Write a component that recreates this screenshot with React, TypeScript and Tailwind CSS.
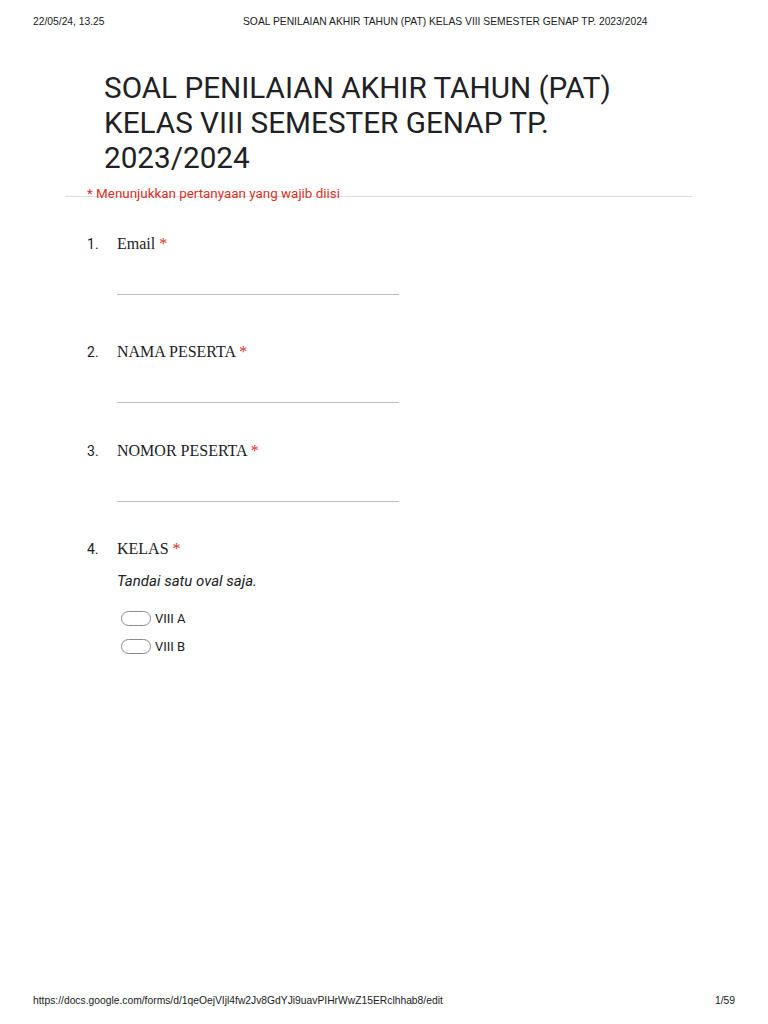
import React from 'react';

const Star = () => <span className="text-[#d93025]"> *</span>;

const TextQuestion = ({ num, label, className }: { num: number; label: string; className?: string }) => (
  <div className={`flex ${className ?? ''}`}>
    <div className="w-[30px] font-['Roboto',sans-serif] text-[14px] leading-[20px] text-[#202124]">{num}.</div>
    <div className="flex-1">
      <div className="font-['Liberation_Serif',serif] text-[16px] leading-[20px] text-[#202124]">
        {label}
        <Star />
      </div>
      <div className="mt-[40px] h-px w-[282px] bg-[#bdbdbd]" />
    </div>
  </div>
);

const Oval = ({ label }: { label: string }) => (
  <div className="flex items-center gap-[4px]">
    <div className="h-[15px] w-[30px] rounded-full border border-[#8a8a8a]" />
    <span className="font-['Roboto',sans-serif] text-[13px] text-[#202124]">{label}</span>
  </div>
);

export default function App() {
  return (
    <div className="relative flex min-h-[1024px] w-[768px] flex-col bg-white">
      <div className="flex px-[33px] pt-[16px] font-['Liberation_Sans',Arial,sans-serif] text-[10.3px] leading-[12px] text-[#202124]">
        <span className="w-[210px]">22/05/24, 13.25</span>
        <span>SOAL PENILAIAN AKHIR TAHUN (PAT) KELAS VIII SEMESTER GENAP TP. 2023/2024</span>
      </div>

      <div className="pl-[104px] pr-[60px] pt-[42px]">
        <h1 className="font-['Roboto',sans-serif] text-[29.7px] leading-[35px] font-normal text-[#202124]">
          SOAL PENILAIAN AKHIR TAHUN (PAT)
          <br />
          KELAS VIII SEMESTER GENAP TP.
          <br />
          2023/2024
        </h1>
      </div>

      <div className="relative mx-[65px] mt-[11px] w-[627px]">
        <div className="pl-[22px] font-['Roboto',sans-serif] text-[13.4px] leading-[16px] text-[#d93025]">
          * Menunjukkan pertanyaan yang wajib diisi
        </div>
        <div className="-mt-[6px] h-px bg-[#dadce0]" />
      </div>

      <div className="flex flex-col pl-[87px] pt-[37px]">
        <TextQuestion num={1} label="Email" />
        <TextQuestion num={2} label="NAMA PESERTA" className="mt-[47px]" />
        <TextQuestion num={3} label="NOMOR PESERTA" className="mt-[38px]" />
        <div className="mt-[37px] flex">
          <div className="w-[30px] font-['Roboto',sans-serif] text-[14px] leading-[20px] text-[#202124]">4.</div>
          <div className="flex-1">
            <div className="font-['Liberation_Serif',serif] text-[16px] leading-[20px] text-[#202124]">
              KELAS
              <Star />
            </div>
            <div className="mt-[12px] font-['Roboto',sans-serif] text-[15px] italic leading-[20px] text-[#202124]">
              Tandai satu oval saja.
            </div>
            <div className="mt-[18px] flex flex-col gap-[8px] pl-[4px]">
              <Oval label="VIII A" />
              <Oval label="VIII B" />
            </div>
          </div>
        </div>
      </div>

      <div className="mt-auto flex justify-between px-[33px] pb-[17px] font-['Liberation_Sans',Arial,sans-serif] text-[10.3px] leading-[12px] text-[#202124]">
        <span>https://docs.google.com/forms/d/1qeOejVIjl4fw2Jv8GdYJi9uavPIHrWwZ15ERclhhab8/edit</span>
        <span>1/59</span>
      </div>
    </div>
  );
}
